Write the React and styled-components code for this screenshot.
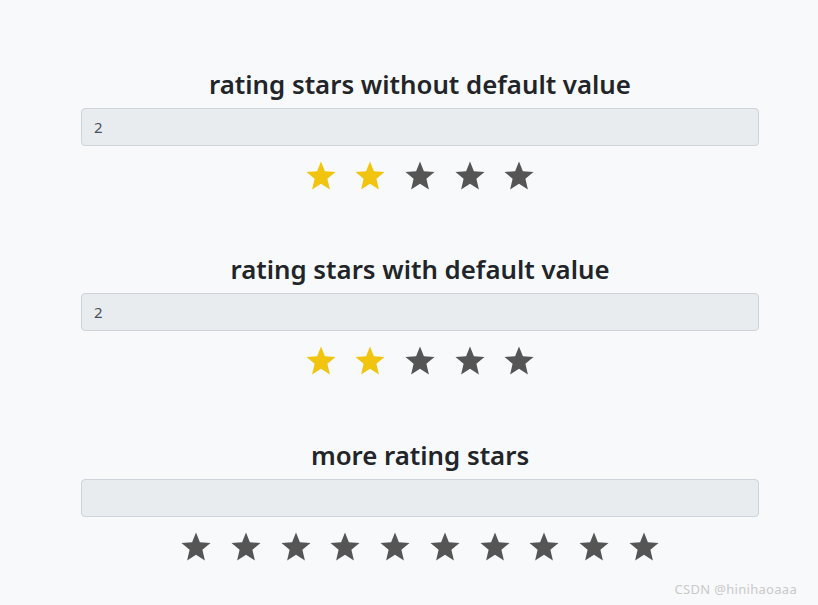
import React from "react";
import styled, { createGlobalStyle } from "styled-components";

const GlobalStyle = createGlobalStyle`
  html, body {
    margin: 0;
    padding: 0;
    background: #f8f9fa;
  }
  body {
    font-family: "Noto Sans", "Open Sans", sans-serif;
    color: #212529;
  }
`;

const Page = styled.div`
  position: relative;
  width: 818px;
  height: 605px;
  overflow: hidden;
  box-sizing: border-box;
  padding: 68px 0 0 81px;
`;

const Column = styled.div`
  width: 678px;
  display: flex;
  flex-direction: column;
  gap: 63.4px;
`;

const Section = styled.section`
  display: flex;
  flex-direction: column;
  align-items: stretch;
`;

const Title = styled.h3`
  margin: 0 0 8px;
  font-size: 25.8px;
  line-height: 32px;
  font-weight: 600;
  text-align: center;
  color: #212529;
`;

const Field = styled.input`
  box-sizing: border-box;
  height: 38px;
  width: 100%;
  margin: 0;
  padding: 6px 12px;
  font-family: "Noto Sans", "Open Sans", sans-serif;
  font-size: 15px;
  color: #495057;
  background: #e9ecef;
  border: 1px solid #ced4da;
  border-radius: 4px;
  outline: none;
`;

const StarRow = styled.div`
  display: flex;
  justify-content: center;
  gap: 19.7px;
  margin-top: 15px;
`;

const StarIcon = styled.svg`
  width: 30px;
  height: 29px;
  display: block;
  fill: ${(p) => (p.$on ? "#f1c40f" : "#555555")};
`;

const Watermark = styled.div`
  position: absolute;
  right: 21px;
  bottom: 7px;
  font-family: "Noto Sans", sans-serif;
  font-size: 13px;
  color: #c9c9c9;
  letter-spacing: 0.3px;
`;

function Star({ on }) {
  return (
    <StarIcon $on={on} viewBox="0 0 30 29">
      <polygon points="15,0.5 18.9,10.2 29.5,11 21.4,17.8 23.9,28.5 15,22.7 6.1,28.5 8.6,17.8 0.5,11 11.1,10.2" />
    </StarIcon>
  );
}

function Rating({ title, value, count }) {
  return (
    <Section>
      <Title>{title}</Title>
      <Field disabled value={value} readOnly />
      <StarRow>
        {Array.from({ length: count }, (_, i) => (
          <Star key={i} on={Number(value) > i} />
        ))}
      </StarRow>
    </Section>
  );
}

export default function App() {
  return (
    <>
      <GlobalStyle />
      <Page>
        <Column>
          <Rating title="rating stars without default value" value="2" count={5} />
          <Rating title="rating stars with default value" value="2" count={5} />
          <Rating title="more rating stars" value="" count={10} />
        </Column>
        <Watermark>CSDN @hinihaoaaa</Watermark>
      </Page>
    </>
  );
}
